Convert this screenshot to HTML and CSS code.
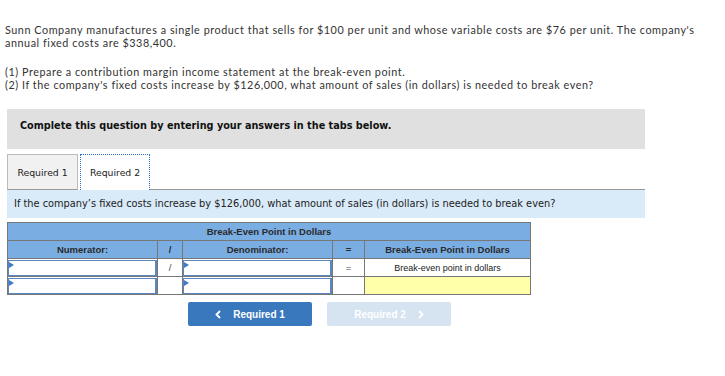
FILE: index.html
```html
<!DOCTYPE html>
<html>
<head>
<meta charset="utf-8">
<link rel="stylesheet" href="styles.css">
</head>
<body>
<div class="page">
  <p class="para">Sunn Company manufactures a single product that sells for $100 per unit and whose variable costs are $76 per unit. The company's annual fixed costs are $338,400.</p>
  <p class="para p2">(1) Prepare a contribution margin income statement at the break-even point.<br>(2) If the company's fixed costs increase by $126,000, what amount of sales (in dollars) is needed to break even?</p>
  <div class="wrap">
    <div class="instr">Complete this question by entering your answers in the tabs below.</div>
    <div class="tabs">
      <div class="tab">Required 1</div>
      <div class="tab active">Required 2</div>
      <div class="tabline"></div>
    </div>
    <div class="band">If the company’s fixed costs increase by $126,000, what amount of sales (in dollars) is needed to break even?</div>
    <table class="grid">
      <colgroup>
        <col class="c-num"><col class="c-op"><col class="c-num"><col class="c-eq"><col class="c-res">
      </colgroup>
      <tr class="h1"><th colspan="5">Break-Even Point in Dollars</th></tr>
      <tr class="h2">
        <th>Numerator:</th>
        <th>/</th>
        <th>Denominator:</th>
        <th>=</th>
        <th>Break-Even Point in Dollars</th>
      </tr>
      <tr>
        <td class="inp"><div class="field"></div></td>
        <td class="op">/</td>
        <td class="inp"><div class="field"></div></td>
        <td class="op">=</td>
        <td class="lbl">Break-even point in dollars</td>
      </tr>
      <tr>
        <td class="inp"><div class="field"></div></td>
        <td class="op"></td>
        <td class="inp"><div class="field"></div></td>
        <td class="op"></td>
        <td class="yellow"></td>
      </tr>
    </table>
    <div class="nav">
      <div class="btn prev"><svg class="chev" width="6" height="9" viewBox="0 0 6 9"><path d="M5 1 L1.5 4.5 L5 8" fill="none" stroke="#fff" stroke-width="1.8"/></svg>Required 1</div>
      <div class="btn next">Required 2<svg class="chev" width="6" height="9" viewBox="0 0 6 9"><path d="M1 1 L4.5 4.5 L1 8" fill="none" stroke="#fff" stroke-width="1.8"/></svg></div>
    </div>
  </div>
</div>
</body>
</html>
```

FILE: styles.css
```css
* { box-sizing: border-box; }
html, body { margin: 0; padding: 0; background: #fff; }
.page { padding: 23px 0 0 5px; width: 725px; }
.para {
  margin: 0;
  font-family: Lato, "Open Sans", sans-serif;
  font-size: 10.8px;
  letter-spacing: 0.55px;
  line-height: 13px;
  color: #333;
  width: 700px;
}
.p2 { margin-top: 16px; }
.wrap { margin-left: 2px; width: 638px; }
.instr {
  margin-top: 18px;
  height: 40px;
  background: #e0e0e0;
  font-family: "DejaVu Sans", Verdana, sans-serif;
  font-weight: bold;
  font-size: 9.7px;
  color: #111;
  padding: 11px 0 0 13px;
}
.tabs { display: flex; align-items: flex-end; margin-top: 5px; height: 36px; }
.tab {
  font-family: "DejaVu Sans", Verdana, sans-serif;
  font-size: 9.3px;
  color: #222;
  width: 71px;
  height: 36px;
  background: #f1f1f1;
  border: 1px solid #bbb;
  border-bottom: 1px solid #999;
  display: flex;
  align-items: center;
  justify-content: center;
}
.tab.active {
  margin-left: 2px;
  width: 70px;
  background: #fff;
  border: 1px dotted #2a6fc9;
  border-bottom: none;
}
.tabline { flex: 1; border-bottom: 1px solid #999; }
.band {
  height: 28px;
  background: #d9eaf8;
  font-family: "DejaVu Sans", Verdana, sans-serif;
  font-size: 9.8px;
  color: #222;
  padding: 8px 0 0 7px;
  white-space: nowrap;
}
.grid {
  margin-top: 4px;
  border-collapse: collapse;
  width: 523px;
  font-family: "Liberation Sans", Arial, sans-serif;
  font-size: 9.5px;
  color: #222;
  table-layout: fixed;
}
.c-num { width: 150px; }
.c-op { width: 25px; }
.c-eq { width: 32px; }
.c-res { width: 166px; }
.grid th, .grid td { border: 1px solid #777; padding: 0; text-align: center; white-space: nowrap; }
.grid th { background: #7aaee3; font-weight: bold; height: 18px; color: #2a2a2a; }
.grid td { height: 18px; background: #fff; }
.field {
  height: 16px;
  border: 1px solid #5b86c0;
  border-width: 1px 2px 1px 1px;
  position: relative;
  background: #fff;
}
.field::before {
  content: "";
  position: absolute;
  left: 0;
  top: 1px;
  border-left: 5px solid #3d7cc9;
  border-top: 3px solid transparent;
  border-bottom: 3px solid transparent;
}
.op { font-size: 9.5px; color: #444; }
.lbl { font-size: 9px; color: #222; }
.grid td.yellow { background: #ffffa9; }
.nav { display: flex; gap: 15px; margin: 7px 0 0 181px; }
.btn {
  width: 124px;
  height: 24px;
  border-radius: 2px;
  font-family: "Liberation Sans", Arial, sans-serif;
  font-weight: bold;
  font-size: 10px;
  color: #fff;
  display: flex;
  align-items: center;
  justify-content: center;
}
.prev { background: #3a78bd; }
.next { background: #d6e3f1; }
.prev .chev { margin-right: 12px; }
.next .chev { margin-left: 12px; }
```
